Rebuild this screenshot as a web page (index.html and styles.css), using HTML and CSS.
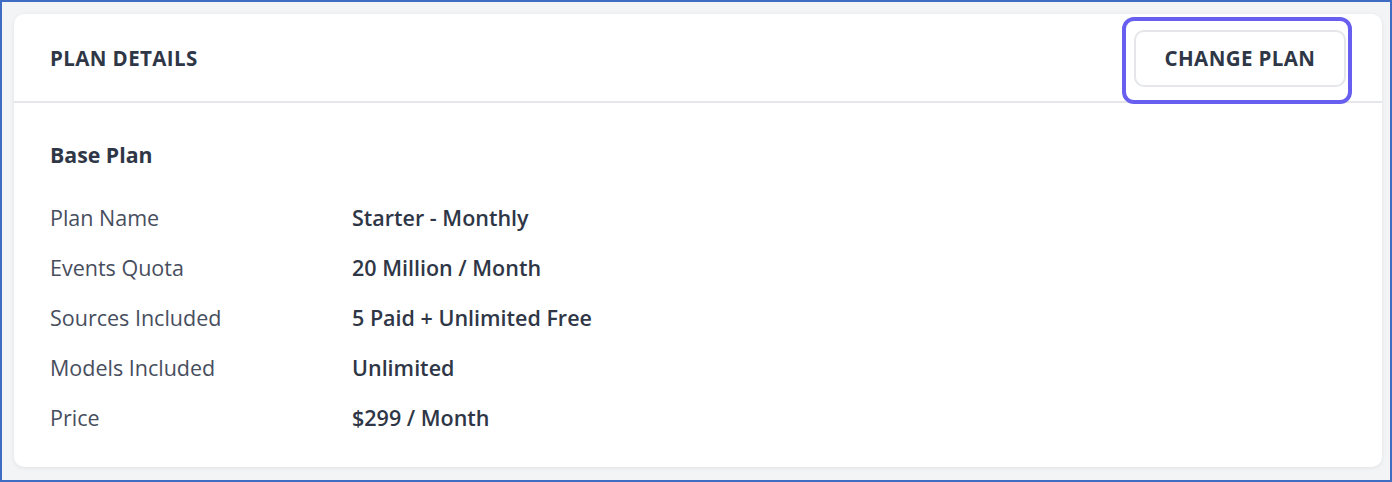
FILE: index.html
```html
<!DOCTYPE html>
<html>
<head>
<meta charset="utf-8">
<link rel="stylesheet" href="styles.css">
</head>
<body>
<div class="frame">
  <section class="card">
    <header class="card-header">
      <h2 class="card-title">PLAN DETAILS</h2>
      <button class="change-btn">CHANGE PLAN</button>
    </header>
    <div class="card-body">
      <h3 class="section-title">Base Plan</h3>
      <dl class="details">
        <dt>Plan Name</dt><dd>Starter - Monthly</dd>
        <dt>Events Quota</dt><dd>20 Million / Month</dd>
        <dt>Sources Included</dt><dd>5 Paid + Unlimited Free</dd>
        <dt>Models Included</dt><dd>Unlimited</dd>
        <dt>Price</dt><dd>$299 / Month</dd>
      </dl>
    </div>
  </section>
</div>
</body>
</html>
```
FILE: styles.css
```css
* { box-sizing: border-box; }
html, body { margin: 0; padding: 0; }
body {
  font-family: "Open Sans", "Noto Sans", sans-serif;
  color: #2f3747;
  background: #f3f4f6;
}
.frame {
  width: 1392px;
  height: 482px;
  border: 2px solid #3f6dc3;
  padding: 12px 8px 13px 12px;
  background: #f3f4f6;
}
.card {
  height: 100%;
  background: #ffffff;
  border-radius: 10px;
  box-shadow: 0 1px 4px rgba(0, 0, 0, 0.08);
  display: flex;
  flex-direction: column;
}
.card-header {
  height: 89px;
  border-bottom: 2px solid #e4e6ea;
  display: flex;
  align-items: center;
  justify-content: space-between;
  padding: 0 36px 0 36px;
}
.card-title {
  margin: 0;
  font-size: 20.5px;
  font-weight: 700;
  letter-spacing: 0.4px;
  color: #2f3747;
}
.change-btn {
  position: relative;
  width: 212px;
  height: 57px;
  margin-top: 1px;
  border: 2px solid #e4e6ea;
  border-radius: 10px;
  background: #fff;
  font-family: inherit;
  font-size: 20.5px;
  font-weight: 700;
  letter-spacing: 0.4px;
  color: #2f3747;
  padding: 0;
}
.change-btn::after {
  content: "";
  position: absolute;
  top: -15px;
  bottom: -19px;
  left: -14px;
  right: -8px;
  border: 4px solid #685ff0;
  border-radius: 12px;
}
.card-body {
  padding: 37px 36px 0 36px;
}
.section-title {
  margin: 0 0 23px 0;
  font-size: 21.3px;
  line-height: 30px;
  font-weight: 700;
  color: #2f3747;
}
.details {
  margin: 0;
  display: grid;
  grid-template-columns: 302px 1fr;
  line-height: 50px;
  font-size: 21.5px;
}
.details dt {
  color: #474e5e;
  font-weight: 400;
}
.details dd {
  margin: 0;
  font-weight: 600;
  color: #2f3747;
}
```
